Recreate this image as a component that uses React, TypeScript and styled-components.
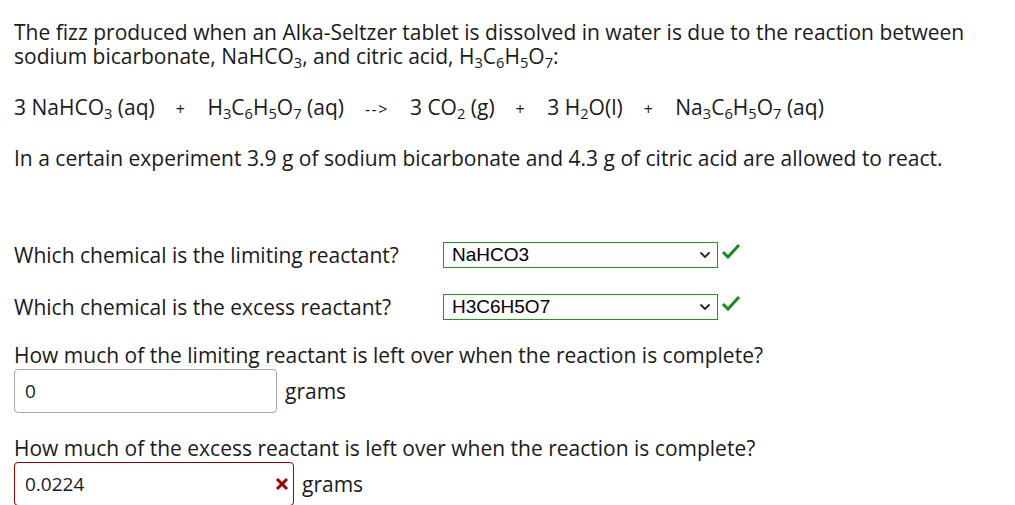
import React from 'react'
import styled, { createGlobalStyle } from 'styled-components'

const GlobalStyle = createGlobalStyle`
  body {
    margin: 0;
    background: #fff;
  }
`

const Page = styled.div`
  padding: 20px 14px 0 14px;
  font-family: 'Open Sans', 'Noto Sans', sans-serif;
  font-size: 21px;
  color: #1a1a1a;
  line-height: 24px;
`

const Para = styled.p<{ $top?: number }>`
  margin: ${(p) => p.$top ?? 0}px 0 0 0;
`

const Equation = styled.div`
  margin-top: 27px;
  display: flex;
  align-items: baseline;
`

const Op = styled.span`
  font-size: 16px;
  letter-spacing: 1.5px;
  margin: 0 21px;
`

const Sub = styled.sub`
  font-size: 0.7em;
  vertical-align: -0.3em;
  line-height: 0;
`

const QRow = styled.div<{ $top: number }>`
  margin-top: ${(p) => p.$top}px;
  display: flex;
  align-items: center;
`

const QLabel = styled.span`
  width: 429px;
`

const Select = styled.div`
  width: 275px;
  height: 26px;
  box-sizing: border-box;
  border: 1px solid #1a9a1a;
  display: flex;
  align-items: center;
  justify-content: space-between;
  padding: 0 6px 0 8px;
  font-family: 'Liberation Sans', Arial, sans-serif;
  font-size: 19px;
  color: #000;
`

const Block = styled.div<{ $top: number }>`
  margin-top: ${(p) => p.$top}px;
`

const InputRow = styled.div`
  display: flex;
  align-items: center;
  margin-top: 2px;
`

const Field = styled.div<{ $w: number; $bad?: boolean }>`
  width: ${(p) => p.$w}px;
  height: 44px;
  box-sizing: border-box;
  border: 1px solid ${(p) => (p.$bad ? '#a00000' : '#a8a8a8')};
  border-radius: 4px;
  display: flex;
  align-items: center;
  justify-content: space-between;
  padding: 0 4px 0 10px;
  font-size: 19px;
`

const Unit = styled.span`
  margin-left: 8px;
`

const Chem = ({ parts }: { parts: (string | [string])[] }) => (
  <>
    {parts.map((p, i) =>
      typeof p === 'string' ? <span key={i}>{p}</span> : <Sub key={i}>{p[0]}</Sub>
    )}
  </>
)

const Caret = () => (
  <svg width="12" height="8" viewBox="0 0 12 8">
    <path d="M1.5 1.5 L6 6 L10.5 1.5" fill="none" stroke="#222" strokeWidth="1.8" />
  </svg>
)

const Check = () => (
  <svg width="20" height="16" viewBox="0 0 20 16" style={{ marginLeft: 3, marginTop: -8 }}>
    <path d="M2 9 L7 14 L18 2" fill="none" stroke="#1a8a1a" strokeWidth="3" />
  </svg>
)

const Cross = () => (
  <svg width="14" height="14" viewBox="0 0 14 14">
    <path d="M2 2 L12 12 M12 2 L2 12" fill="none" stroke="#a00000" strokeWidth="3" />
  </svg>
)

const App: React.FC = () => {
  return (
    <>
      <GlobalStyle />
      <Page>
        <Para>
          The fizz produced when an Alka-Seltzer tablet is dissolved in water is due to the reaction
          between sodium bicarbonate, NaHCO<Sub>3</Sub>, and citric acid, H<Sub>3</Sub>C<Sub>6</Sub>H
          <Sub>5</Sub>O<Sub>7</Sub>:
        </Para>
        <Equation>
          <span>
            3 <Chem parts={['NaHCO', ['3']]} /> (aq)
          </span>
          <Op>+</Op>
          <span>
            <Chem parts={['H', ['3'], 'C', ['6'], 'H', ['5'], 'O', ['7']]} /> (aq)
          </span>
          <Op>--&gt;</Op>
          <span>
            3 <Chem parts={['CO', ['2']]} /> (g)
          </span>
          <Op>+</Op>
          <span>
            3 <Chem parts={['H', ['2'], 'O(l)']} />
          </span>
          <Op>+</Op>
          <span>
            <Chem parts={['Na', ['3'], 'C', ['6'], 'H', ['5'], 'O', ['7']]} /> (aq)
          </span>
        </Equation>
        <Para $top={25}>
          In a certain experiment 3.9 g of sodium bicarbonate and 4.3 g of citric acid are allowed to
          react.
        </Para>
        <QRow $top={72}>
          <QLabel>Which chemical is the limiting reactant?</QLabel>
          <Select>
            NaHCO3
            <Caret />
          </Select>
          <Check />
        </QRow>
        <QRow $top={26}>
          <QLabel>Which chemical is the excess reactant?</QLabel>
          <Select>
            H3C6H5O7
            <Caret />
          </Select>
          <Check />
        </QRow>
        <Block $top={23}>
          How much of the limiting reactant is left over when the reaction is complete?
          <InputRow>
            <Field $w={263}>0</Field>
            <Unit>grams</Unit>
          </InputRow>
        </Block>
        <Block $top={23}>
          How much of the excess reactant is left over when the reaction is complete?
          <InputRow>
            <Field $w={280} $bad>
              0.0224
              <Cross />
            </Field>
            <Unit>grams</Unit>
          </InputRow>
        </Block>
      </Page>
    </>
  )
}

export default App
